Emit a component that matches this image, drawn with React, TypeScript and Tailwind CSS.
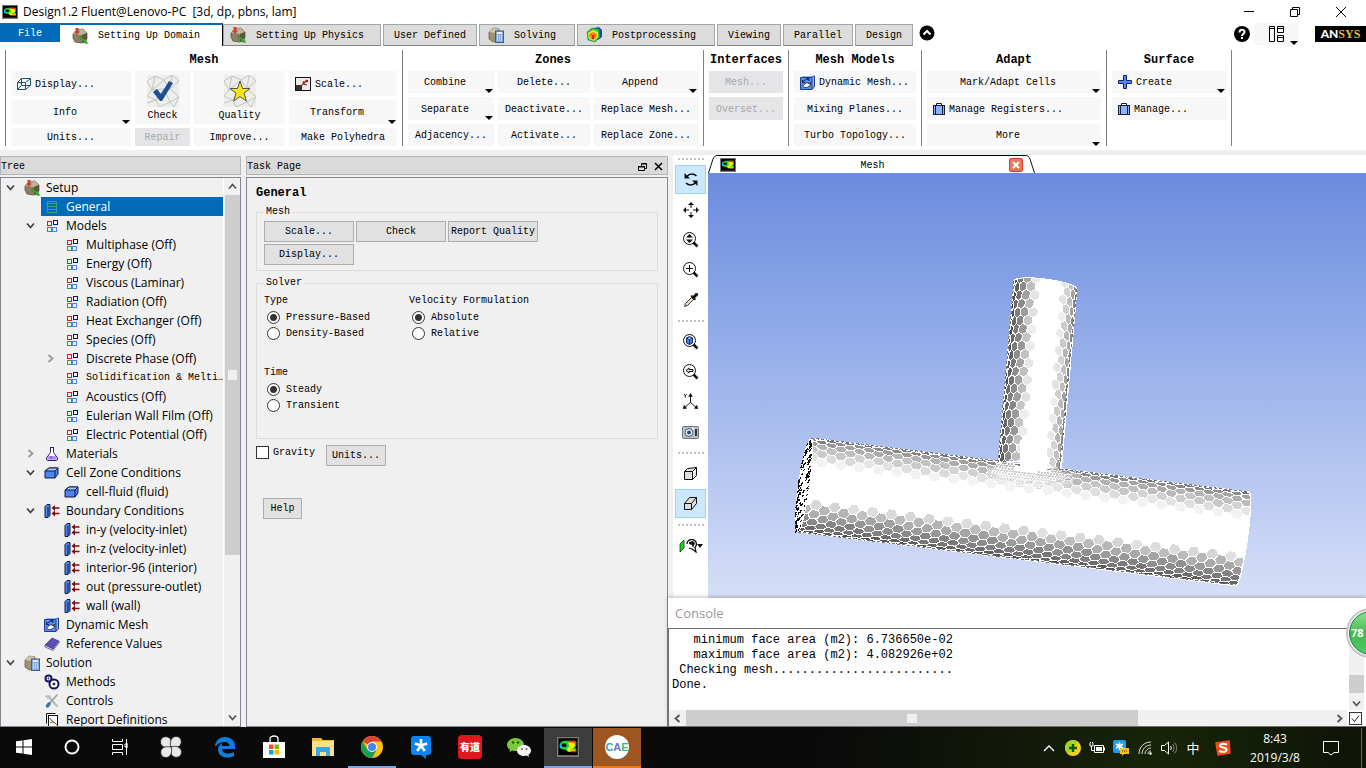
import type { ReactNode } from 'react';

const MONO = "font-['Liberation_Mono',monospace]";
const SANS = "font-['Open_Sans','Noto_Sans_CJK_SC',sans-serif]";

/* ---------- icons ---------- */

function FluentIcon({ className = 'w-4 h-4' }: { className?: string }) {
  return (
    <svg viewBox="0 0 16 16" preserveAspectRatio="none" className={className}>
      <rect width="16" height="16" fill="#7a7a7a" />
      <rect x="1" y="1" width="14" height="13.500" fill="#000" />
      <path d="M2 7c0-3 2-4 4-4h7c1.500 0 1.500 5-.5 6H14v3H8l-2-2C3 10 2 9 2 7z" fill="#19d63c" />
      <path d="M8 4h5c1 1 .5 3.500-1 4.500L9.500 10H13v1.500H8.500L7 9.500l2-2z" fill="#f7ef00" />
      <path d="M8.500 3H13c1.500 1 1.200 4 0 5.500V5c-1-.8-3-1-4.500-.5zM10 11h4v1.200h-4z" fill="#ff2a00" />
      <path d="M2 5.500h1v3.500H2z" fill="#00c8ff" />
      <ellipse cx="5.200" cy="6.500" rx="1.800" ry="1.500" fill="#000" />
    </svg>
  );
}

function SetupIcon() {
  return (
    <svg viewBox="0 0 16 16" className="w-4 h-4">
      <path d="M1 6l4-4 6-1 4 4v6l-5 4-7-1-2-4z" fill="#8c7f63" stroke="#4a4233" strokeWidth=".7" />
      <path d="M1 6l4-4 6-1 4 4-5 2z" fill="#bfb499" />
      <path d="M10 7l5-2v6l-5 4z" fill="#5f543e" />
      <path d="M3.500 0h3v3.500H8L5 7 2 3.500h1.500z" fill="#c8432a" />
      <path d="M8.500 8.500l4 3 1-1 2 5-5-1 1-1.200-4-3.300z" fill="#3fae2a" stroke="#1e6d13" strokeWidth=".5" />
    </svg>
  );
}

function SolveIcon() {
  return (
    <svg viewBox="0 0 16 16" className="w-4 h-4">
      <path d="M1 5l4-4 6 1v11l-6 2-4-3z" fill="#9c9272" stroke="#5c5540" strokeWidth=".7" />
      <path d="M1 5l4-4 6 1-4 4z" fill="#cfc8ac" />
      <rect x="7.500" y="4" width="8" height="11.500" fill="#86a8d8" stroke="#3d5d92" />
      <rect x="9" y="5" width="5" height="2" fill="#e8f0fb" />
      <path d="M9 9h5M9 11h5M9 13h5" stroke="#fff" strokeDasharray="1 1" />
    </svg>
  );
}

function PostIcon() {
  return (
    <svg viewBox="0 0 16 16" className="w-4 h-4">
      <path d="M8 1l5-1 3 3v7l-4 3-3-3z" fill="#1747d1" />
      <path d="M1 5l5-4 7 1 1 8-5 5-7-2z" fill="#28c840" stroke="#116b2a" strokeWidth=".5" />
      <path d="M2 6l5-3 5 2v5l-4 4-5-2z" fill="#f4e61c" />
      <path d="M3 7l4-2 4 2-1 4-3 2-3-2z" fill="#f58a12" />
      <path d="M4.500 7L7 8.500 9.500 7 8 9v3H6V9z" fill="#d9230f" />
    </svg>
  );
}

function DisplayIcon() {
  return (
    <svg viewBox="0 0 14 12" className="w-3.5 h-3" fill="none" stroke="#1f5468">
      <path d="M.5 4.500h8v7h-8zM4.500 .5h9v7h-9zM.5 4.500l4-4M8.500 4.500l5-4M8.500 11.500l5-4M.5 11.500l4-4" />
    </svg>
  );
}

function ScaleIcon() {
  return (
    <svg viewBox="0 0 16 14" className="w-4 h-3.5">
      <rect x=".5" y=".5" width="15" height="13" fill="#f5e9e9" stroke="#111" />
      <rect x="1" y="8" width="6" height="5" fill="#333" />
      <path d="M7 8l5-5" stroke="#8f1d1d" strokeWidth="1.500" />
      <path d="M8 4l1 3 3 1" fill="none" stroke="#8f1d1d" />
      <circle cx="12" cy="4" r="1.200" fill="#8f1d1d" />
    </svg>
  );
}

function MeshBackdrop({ children }: { children: ReactNode }) {
  return (
    <svg viewBox="0 0 32 32" className="w-8 h-8">
      <rect width="32" height="32" fill="#ededeb" />
      <path
        d="M0 6l8-5 9 4 8-5 7 6M0 6l5 9 12-10 6 9 9-8M5 15l-5 6 9 4 8-11M23 14l9 8-9 5-6-13-8 11 3 7 11-5 4 5M0 28l9-3M5 15l12-1 6 0M8 1l-3 14M25 0l-2 14M32 22l-5 10"
        fill="none"
        stroke="#c4c4c0"
      />
      {children}
    </svg>
  );
}

function DynamicIcon() {
  return (
    <svg viewBox="0 0 15 15" className="w-[15px] h-[15px]">
      <path d="M1 3l1.500-2H14v11l-1.500 2H1z" fill="#8db3ff" />
      <path d="M1 3h11v11H1z" fill="#5b8def" />
      <path d="M.5 14.500V2.500H12v12zM12 2.500l2-2M12 14l2.500-2V1" fill="none" stroke="#1b3c8c" />
      <path d="M3 11.500c0-2 2-2.500 4-4l2.500 1.500 1-2c1 3-1.500 5.500-5 5.500-1.500 0-2.500-.2-2.500-1z" fill="#fff" stroke="#111" strokeWidth=".8" />
      <path d="M2.500 7c1.500-1.500 3-2.500 6-3M6.500 3.500H9v2.500M2.500 5v2.500H5" fill="none" stroke="#0c1f55" />
    </svg>
  );
}

function CaseIcon() {
  return (
    <svg viewBox="0 0 12 12" className="w-3 h-3">
      <path d="M3.500 2.500v-2h5v2" fill="none" stroke="#14213d" />
      <rect x=".5" y="2.500" width="11" height="9" fill="#8fb0ff" stroke="#14213d" />
      <path d="M2.500 2.500v9M9.500 2.500v9" stroke="#14213d" />
    </svg>
  );
}

function PlusIcon() {
  return (
    <svg viewBox="0 0 14 14" className="w-3.5 h-3.5">
      <path d="M5.500 .5h3v5h5v3h-5v5h-3v-5h-5v-3h5z" fill="#4f86ff" stroke="#12245a" />
    </svg>
  );
}

function GeneralIcon() {
  return (
    <svg viewBox="0 0 10 12" className="w-2.5 h-3" fill="none" stroke="#3fa37d">
      <path d="M.5 .5h9v11h-9zM.5 2.500h9M.5 5.500h9M.5 8.500h9" />
    </svg>
  );
}

function ModelsIcon() {
  return (
    <svg viewBox="0 0 12 12" className="w-3 h-3" fill="none" shapeRendering="crispEdges">
      <rect x="1" y="1.500" width="4" height="4" stroke="#e8141c" />
      <rect x="7" y=".5" width="4" height="4" stroke="#12126e" />
      <rect x="1" y="7" width="4" height="4" stroke="#3f9a4a" />
      <rect x="6.500" y="7" width="4" height="4" stroke="#4d84f0" />
    </svg>
  );
}

function FlaskIcon() {
  return (
    <svg viewBox="0 0 14 16" className="w-3.5 h-4">
      <path d="M5 1.500h4M5.500 1.500v5L1.500 12c-.5 1.500.5 2.500 1.500 2.500h8c1 0 2-1 1.500-2.500L8.500 6.500v-5" fill="#fff" stroke="#2a2360" />
      <path d="M3.500 10h7l1.500 2.500c0 .8-.5 1.200-1 1.200H3c-.6 0-1-.6-1-1.200z" fill="#b58cf2" />
      <circle cx="6" cy="11.500" r="1" fill="#6b3fd0" />
    </svg>
  );
}

function CellIcon() {
  return (
    <svg viewBox="0 0 15 12" className="w-[15px] h-3">
      <path d="M1 4l4-3h9v6l-3 4H1z" fill="#4d84f0" stroke="#101c44" />
      <path d="M1 4l4-3h9l-3 3z" fill="#a9c5ff" stroke="#101c44" />
      <path d="M11 4v7" stroke="#101c44" />
    </svg>
  );
}

function BoundaryIcon() {
  return (
    <svg viewBox="0 0 16 14" className="w-4 h-3.5">
      <path d="M1 2.500L3 .5h3v11l-2 2H1z" fill="#4d84f0" stroke="#101c44" />
      <path d="M4 3v10" stroke="#101c44" />
      <path d="M9 4h6.500M9 9.500h6.500" stroke="#7a0f12" strokeWidth="1.400" />
      <path d="M7.500 4L11 1v6zM7.500 9.500l3.500-3v6z" fill="#7a0f12" />
    </svg>
  );
}

function BookIcon() {
  return (
    <svg viewBox="0 0 16 14" className="w-4 h-3.5">
      <path d="M1 8l7-7 7 3-6 8z" fill="#5a4fb0" stroke="#322a70" strokeWidth=".6" />
      <path d="M1 8l8 4 6-8v2l-6 7.500L1 10z" fill="#d8d6ee" stroke="#322a70" strokeWidth=".6" />
    </svg>
  );
}

function GearsIcon() {
  return (
    <svg viewBox="0 0 16 16" className="w-4 h-4" fill="#fff" stroke="#15155e">
      <circle cx="4.500" cy="4.500" r="3" strokeWidth="2" />
      <circle cx="4.500" cy="4.500" r=".6" />
      <circle cx="10" cy="10" r="4.500" strokeWidth="2" />
      <circle cx="10" cy="10" r="1" fill="#15155e" />
    </svg>
  );
}

function ToolsIcon() {
  return (
    <svg viewBox="0 0 16 16" className="w-4 h-4" strokeLinecap="round">
      <path d="M4 3l9 10" stroke="#b5b5b5" strokeWidth="2" />
      <path d="M13 2L5 11" stroke="#9a9a9a" strokeWidth="1.500" />
      <path d="M2 3l2 2 2-2" stroke="#bdbdbd" fill="none" strokeWidth="1.500" />
      <path d="M3.500 13l1.500-2" stroke="#3f6fa8" strokeWidth="3.500" />
    </svg>
  );
}

function ReportIcon() {
  return (
    <svg viewBox="0 0 14 15" className="w-3.5 h-[15px]" fill="#fff" stroke="#111">
      <path d="M1.500 11.500v-10h9" />
      <rect x="3.500" y="3.500" width="9" height="11" />
      <path d="M5 6l2 3 3 2 2 2" stroke="#e02020" fill="none" />
      <path d="M5 11l2-1 2 1" stroke="#1d9e36" fill="none" />
    </svg>
  );
}

function Chevron({ dir, color = '#555' }: { dir: 'up' | 'down' | 'left' | 'right'; color?: string }) {
  const d = {
    up: 'M1 6.500l3.500-4 3.500 4',
    down: 'M1 2.500l3.500 4 3.500-4',
    left: 'M6.500 1l-4 3.500 4 3.500',
    right: 'M2.500 1l4 3.500-4 3.500',
  }[dir];
  return (
    <svg viewBox="0 0 9 9" className="w-[9px] h-[9px]" fill="none" stroke={color} strokeWidth="1.800">
      <path d={d} />
    </svg>
  );
}

/* ---------- title bar and ribbon ---------- */

function TitleBar() {
  return (
    <header className={`flex items-center h-[23px] bg-white ${SANS}`}>
      <FluentIcon className="w-4 h-3.5 ml-0.5" />
      <h1 className="ml-[5px] text-[12px] leading-5 whitespace-pre text-black">Design1.2 Fluent@Lenovo-PC  [3d, dp, pbns, lam]</h1>
      <div className="ml-auto mr-0.5 flex">
        <button aria-label="Minimize" className="w-[46px] h-5 grid place-items-center">
          <svg viewBox="0 0 10 10" className="w-2.5 h-2.5" stroke="#000"><path d="M0 4.500h10" /></svg>
        </button>
        <button aria-label="Restore" className="w-[46px] h-5 grid place-items-center">
          <svg viewBox="0 0 10 10" className="w-2.5 h-2.5" fill="none" stroke="#000">
            <path d="M.5 2.500h7v7h-7zM2.500 2.500v-2h7v7h-2" />
          </svg>
        </button>
        <button aria-label="Close" className="w-[46px] h-5 grid place-items-center">
          <svg viewBox="0 0 10 10" className="w-2.5 h-2.5" stroke="#000"><path d="M0 0l10 10M10 0L0 10" /></svg>
        </button>
      </div>
    </header>
  );
}

function Tab({ width, icon, children }: { width: string; icon?: ReactNode; children: ReactNode }) {
  return (
    <button
      className={`${width} h-[22px] shrink-0 flex items-center justify-center border border-[#a5a5a5] border-b-[#808080] bg-[#dcdcdc] ${
        icon ? 'pr-2.5' : ''
      }`}
    >
      {icon && <span className="mr-2.5">{icon}</span>}
      <span className="pt-0.5">{children}</span>
    </button>
  );
}

function TabBar() {
  return (
    <nav className="flex h-[23px] bg-white">
      <button className="w-[60px] h-[19px] bg-[#026bb9] pt-0.5 text-white">File</button>
      <button className="w-[163px] h-[23px] shrink-0 flex items-center justify-center border-t-2 border-t-[#026bb9] border-r border-r-black pr-2.5">
        <SetupIcon />
        <span className="ml-2.5">Setting Up Domain</span>
      </button>
      <div className="flex gap-0.5 pt-px">
        <Tab width="w-[158px]" icon={<SetupIcon />}>Setting Up Physics</Tab>
        <Tab width="w-[94px]">User Defined</Tab>
        <Tab width="w-[96px]" icon={<SolveIcon />}>Solving</Tab>
        <Tab width="w-[138px]" icon={<PostIcon />}>Postprocessing</Tab>
        <Tab width="w-[64px]">Viewing</Tab>
        <Tab width="w-[70px]">Parallel</Tab>
        <Tab width="w-[58px]">Design</Tab>
      </div>
      <button aria-label="Collapse ribbon" className="ml-1.5 w-4 h-[19px] grid place-items-center">
        <svg viewBox="0 0 16 16" className="w-4 h-4">
          <circle cx="8" cy="8" r="7.500" />
          <path d="M4.500 9.500L8 6l3.500 3.500" fill="none" stroke="#fff" strokeWidth="2" />
        </svg>
      </button>
      <div className="ml-auto flex">
        <button aria-label="Help" className="w-5 h-[22px] grid place-items-center">
          <svg viewBox="0 0 16 16" className="w-4 h-4">
            <circle cx="8" cy="8" r="8" />
            <path d="M5.500 6.500c0-3.500 5-3.500 5-.5 0 2-2.500 2-2.500 4" fill="none" stroke="#fff" strokeWidth="2" />
            <rect x="7" y="11" width="2" height="2" fill="#fff" />
          </svg>
        </button>
        <button aria-label="Arrange the workspace" className="relative ml-0.5 w-[45px] h-[22px] grid place-items-center bg-[#f7f7f7]">
          <svg viewBox="0 0 16 16" className="w-4 h-4" fill="none" stroke="#000">
            <path d="M.5 .5h5v15h-5zM.5 2.500h5M8.500 .5h6v6h-6zM8.500 2.500h6M8.500 9.500h6v6h-6zM8.500 11.500h6" />
          </svg>
          <DropArrow />
        </button>
        <div className="ml-4 mt-[3px] w-[51px] h-4 flex items-center justify-center bg-black text-[12px] leading-4 text-white">
          <span className="font-['Lato',sans-serif] font-black">AN</span>
          <span className="font-['Liberation_Serif',serif] font-bold text-[#e8bb3c]">SYS</span>
        </div>
      </div>
    </nav>
  );
}

function DropArrow() {
  return <span className="absolute right-px bottom-0 border-x-4 border-x-transparent border-t-4 border-t-black" />;
}

interface CmdProps {
  children: ReactNode;
  icon?: ReactNode;
  drop?: boolean;
  left?: boolean;
  disabled?: boolean;
}

function Cmd({ children, icon, drop, left, disabled }: CmdProps) {
  return (
    <button
      disabled={disabled}
      className={`relative flex items-center gap-1 whitespace-nowrap ${left ? 'justify-start pl-1.5' : 'justify-center'} ${
        drop && !left ? 'pr-3' : ''
      } ${disabled ? 'bg-[#e5e5e7] text-[#a8a8a8]' : 'bg-[#f7f7f7]'}`}
    >
      {icon}
      <span className="pt-0.5">{children}</span>
      {drop && <DropArrow />}
    </button>
  );
}

function BigCmd({ children, icon }: { children: ReactNode; icon: ReactNode }) {
  return (
    <button className="row-span-2 flex flex-col items-center pt-1 bg-[#f7f7f7]">
      {icon}
      <span className="pt-px leading-4">{children}</span>
    </button>
  );
}

function Group({ title, grid, children }: { title: string; grid: string; children: ReactNode }) {
  return (
    <section className="border-l border-[#808080] px-[5px]">
      <h2 className="h-[21px] pt-0.5 text-center text-[12px] leading-4 font-bold whitespace-nowrap">{title}</h2>
      <div className={`grid grid-flow-col gap-1 ${grid}`}>{children}</div>
    </section>
  );
}

function Ribbon() {
  return (
    <div className="flex pl-[5px] pt-1 pb-1 bg-white">
      <Group title="Mesh" grid="grid-rows-[25px_24px_18px] grid-cols-[120px_55px_91px_108px]">
        <Cmd left icon={<DisplayIcon />}>Display...</Cmd>
        <Cmd drop>Info</Cmd>
        <Cmd>Units...</Cmd>
        <BigCmd
          icon={
            <MeshBackdrop>
              <path d="M6 17l4-3 4 5 8-13 4 2-11 18h-2z" fill="#1e4f93" />
            </MeshBackdrop>
          }
        >
          Check
        </BigCmd>
        <Cmd disabled>Repair</Cmd>
        <BigCmd
          icon={
            <MeshBackdrop>
              <path d="M16 6l2.500 7.500H26l-6 4.500 2.300 8L16 21.500 9.700 26l2.300-8-6-4.500h7.500z" fill="#ffe60a" stroke="#555" />
            </MeshBackdrop>
          }
        >
          Quality
        </BigCmd>
        <Cmd>Improve...</Cmd>
        <Cmd left icon={<ScaleIcon />}>Scale...</Cmd>
        <Cmd drop>Transform</Cmd>
        <Cmd>Make Polyhedra</Cmd>
      </Group>
      <Group title="Zones" grid="grid-rows-[22px_23px_22px] grid-cols-[86px_92px_104px]">
        <Cmd drop>Combine</Cmd>
        <Cmd drop>Separate</Cmd>
        <Cmd>Adjacency...</Cmd>
        <Cmd>Delete...</Cmd>
        <Cmd>Deactivate...</Cmd>
        <Cmd>Activate...</Cmd>
        <Cmd drop>Append</Cmd>
        <Cmd>Replace Mesh...</Cmd>
        <Cmd>Replace Zone...</Cmd>
      </Group>
      <Group title="Interfaces" grid="grid-rows-[22px_23px_22px] grid-cols-[74px]">
        <Cmd disabled>Mesh...</Cmd>
        <Cmd disabled>Overset...</Cmd>
      </Group>
      <Group title="Mesh Models" grid="grid-rows-[22px_23px_22px] grid-cols-[122px]">
        <Cmd left icon={<DynamicIcon />}>Dynamic Mesh...</Cmd>
        <Cmd>Mixing Planes...</Cmd>
        <Cmd>Turbo Topology...</Cmd>
      </Group>
      <Group title="Adapt" grid="grid-rows-[22px_23px_22px] grid-cols-[174px]">
        <Cmd drop>Mark/Adapt Cells</Cmd>
        <Cmd left icon={<CaseIcon />}>Manage Registers...</Cmd>
        <Cmd drop>More</Cmd>
      </Group>
      <Group title="Surface" grid="grid-rows-[22px_23px_22px] grid-cols-[114px]">
        <Cmd left drop icon={<PlusIcon />}>Create</Cmd>
        <Cmd left icon={<CaseIcon />}>Manage...</Cmd>
      </Group>
      <div className="border-l border-[#808080]" />
    </div>
  );
}

/* ---------- outline tree ---------- */

interface Node {
  label: string;
  level: number;
  icon: ReactNode;
  open?: boolean;
  selected?: boolean;
  mono?: boolean;
}

const nodes: Node[] = [
  { label: 'Setup', level: 0, icon: <SetupIcon />, open: true },
  { label: 'General', level: 1, icon: <GeneralIcon />, selected: true },
  { label: 'Models', level: 1, icon: <ModelsIcon />, open: true },
  { label: 'Multiphase (Off)', level: 2, icon: <ModelsIcon /> },
  { label: 'Energy (Off)', level: 2, icon: <ModelsIcon /> },
  { label: 'Viscous (Laminar)', level: 2, icon: <ModelsIcon /> },
  { label: 'Radiation (Off)', level: 2, icon: <ModelsIcon /> },
  { label: 'Heat Exchanger (Off)', level: 2, icon: <ModelsIcon /> },
  { label: 'Species (Off)', level: 2, icon: <ModelsIcon /> },
  { label: 'Discrete Phase (Off)', level: 2, icon: <ModelsIcon />, open: false },
  { label: 'Solidification & Melti…', level: 2, icon: <ModelsIcon />, mono: true },
  { label: 'Acoustics (Off)', level: 2, icon: <ModelsIcon /> },
  { label: 'Eulerian Wall Film (Off)', level: 2, icon: <ModelsIcon /> },
  { label: 'Electric Potential (Off)', level: 2, icon: <ModelsIcon /> },
  { label: 'Materials', level: 1, icon: <FlaskIcon />, open: false },
  { label: 'Cell Zone Conditions', level: 1, icon: <CellIcon />, open: true },
  { label: 'cell-fluid (fluid)', level: 2, icon: <CellIcon /> },
  { label: 'Boundary Conditions', level: 1, icon: <BoundaryIcon />, open: true },
  { label: 'in-y (velocity-inlet)', level: 2, icon: <BoundaryIcon /> },
  { label: 'in-z (velocity-inlet)', level: 2, icon: <BoundaryIcon /> },
  { label: 'interior-96 (interior)', level: 2, icon: <BoundaryIcon /> },
  { label: 'out (pressure-outlet)', level: 2, icon: <BoundaryIcon /> },
  { label: 'wall (wall)', level: 2, icon: <BoundaryIcon /> },
  { label: 'Dynamic Mesh', level: 1, icon: <DynamicIcon /> },
  { label: 'Reference Values', level: 1, icon: <BookIcon /> },
  { label: 'Solution', level: 0, icon: <SolveIcon />, open: true },
  { label: 'Methods', level: 1, icon: <GearsIcon /> },
  { label: 'Controls', level: 1, icon: <ToolsIcon /> },
  { label: 'Report Definitions', level: 1, icon: <ReportIcon /> },
];

const indent = ['pl-0', 'pl-5', 'pl-10'];

function TreeRow({ node }: { node: Node }) {
  return (
    <li className={`flex h-[19px] ${indent[node.level]}`}>
      <span className="w-[19px] mr-px shrink-0 grid place-items-center">
        {node.open !== undefined && <Chevron dir={node.open ? 'down' : 'right'} color={node.open ? '#444' : '#999'} />}
      </span>
      <span className={`flex flex-1 min-w-0 items-center ${node.selected ? 'bg-[#026bb9] text-white' : ''}`}>
        <span className="w-[21px] mr-px shrink-0 grid place-items-center">{node.icon}</span>
        <span className={`pl-[3px] whitespace-nowrap leading-4 ${node.mono ? `${MONO} text-[10px]` : 'text-[12px]'}`}>{node.label}</span>
      </span>
    </li>
  );
}

function PanelHeader({ title, children }: { title: string; children?: ReactNode }) {
  return (
    <div className="flex items-center h-[19px] mb-0.5 shrink-0 border border-[#b4b4b4] bg-[#dadada] pt-0.5">
      <h2>{title}</h2>
      {children}
    </div>
  );
}

function TreePanel() {
  return (
    <aside className="w-[241px] shrink-0 flex flex-col pt-px">
      <PanelHeader title="Tree" />
      <div className="flex flex-1 min-h-0 border border-[#828790]">
        <ul className={`flex-1 min-w-0 overflow-hidden ${SANS}`}>
          {nodes.map((n) => (
            <TreeRow key={n.label} node={n} />
          ))}
        </ul>
        <div className="w-[17px] flex flex-col items-center border-l border-white">
          <span className="h-[17px] grid place-items-center"><Chevron dir="up" /></span>
          <div className="w-[15px] h-[360px] grid place-items-center bg-[#cdcdcd]">
            <span className="w-[9px] h-[10px] bg-[#f0f0f0]" />
          </div>
          <span className="mt-auto h-[17px] grid place-items-center"><Chevron dir="down" /></span>
        </div>
      </div>
    </aside>
  );
}

/* ---------- task page ---------- */

function PushButton({ className = '', children }: { className?: string; children: ReactNode }) {
  return <button className={`h-[21px] border border-[#adadad] bg-[#e1e1e1] whitespace-nowrap ${className}`}>{children}</button>;
}

function Radio({ name, label, checked }: { name: string; label: string; checked?: boolean }) {
  return (
    <label className="flex items-center h-4 pl-[3px]">
      <input
        type="radio"
        name={name}
        defaultChecked={checked}
        className="appearance-none w-[13px] h-[13px] rounded-full border border-[#333] bg-white checked:bg-[radial-gradient(circle,#333_0,#333_3px,#fff_4px)]"
      />
      <span className="ml-[6px] pt-px">{label}</span>
    </label>
  );
}

function TaskPage() {
  return (
    <section className="w-[422px] shrink-0 ml-[5px] flex flex-col pt-px">
      <PanelHeader title="Task Page">
        <button aria-label="Float" className="ml-auto mr-1.5">
          <svg viewBox="0 0 10 10" className="w-2.5 h-2.5" fill="none" stroke="#000">
            <path d="M.5 4.500h6v4h-6zM.5 5h6M3.500 4V1.500h5v5h-2M3.500 2h5" />
          </svg>
        </button>
        <button aria-label="Close" className="mr-1">
          <svg viewBox="0 0 9 9" className="w-[9px] h-[9px]" stroke="#000" strokeWidth="1.500"><path d="M1 1l7 7M8 1L1 8" /></svg>
        </button>
      </PanelHeader>
      <div className="flex-1 min-h-0 border border-[#828790] pl-[9px] pr-[9px] pt-[7px]">
        <h3 className="text-[12px] leading-4 font-bold">General</h3>
        <fieldset className="mt-[3px] border border-[#dcdcdc] px-[7px] pb-[5px]">
          <legend className="px-0.5 leading-4">Mesh</legend>
          <div className="grid grid-cols-[90px_90px_90px] gap-0.5 pt-px">
            <PushButton>Scale...</PushButton>
            <PushButton>Check</PushButton>
            <PushButton>Report Quality</PushButton>
            <PushButton>Display...</PushButton>
          </div>
        </fieldset>
        <fieldset className="mt-1 border border-[#dcdcdc] px-[7px] pb-[25px]">
          <legend className="px-0.5 leading-4">Solver</legend>
          <div className="flex pt-0.5 leading-4">
            <div className="w-[145px]" role="radiogroup" aria-label="Type">
              <div>Type</div>
              <Radio name="type" label="Pressure-Based" checked />
              <Radio name="type" label="Density-Based" />
            </div>
            <div role="radiogroup" aria-label="Velocity Formulation">
              <div>Velocity Formulation</div>
              <Radio name="velocity" label="Absolute" checked />
              <Radio name="velocity" label="Relative" />
            </div>
          </div>
          <div className="mt-6 leading-4" role="radiogroup" aria-label="Time">
            <div>Time</div>
            <Radio name="time" label="Steady" checked />
            <Radio name="time" label="Transient" />
          </div>
        </fieldset>
        <div className="mt-1.5 flex items-start">
          <label className="flex items-center h-[15px] w-[70px]">
            <input type="checkbox" className="appearance-none w-[13px] h-[13px] border border-[#333] bg-white" />
            <span className="ml-1">Gravity</span>
          </label>
          <PushButton className="w-[60px]">Units...</PushButton>
        </div>
        <PushButton className="mt-8 ml-[7px] w-[39px]">Help</PushButton>
      </div>
    </section>
  );
}

/* ---------- graphics toolbar ---------- */

function Lens({ children }: { children: ReactNode }) {
  return (
    <svg viewBox="0 0 17 17" className="w-[17px] h-[17px]" fill="none" stroke="#111">
      <circle cx="7.500" cy="7.500" r="6" />
      <path d="M11.500 11.500l4 4" strokeWidth="2.500" />
      {children}
    </svg>
  );
}

function Tool({ label, active, children }: { label: string; active?: boolean; children: ReactNode }) {
  return (
    <button
      aria-label={label}
      className={`w-[31px] h-[29px] mb-px shrink-0 grid place-items-center border ${
        active ? 'border-[#99d1ff] bg-[#cce8ff]' : 'border-transparent'
      }`}
    >
      {children}
    </button>
  );
}

function Grip() {
  return <div className="w-[26px] h-3 shrink-0 flex items-center"><span className="w-full border-t-2 border-dotted border-[#c4c4c4]" /></div>;
}

function Toolbar() {
  return (
    <div className="w-[35px] shrink-0 flex flex-col items-center overflow-hidden bg-white">
      <div className="-mt-1.5 h-4 flex items-end"><Grip /></div>
      <Tool label="Rotate" active>
        <svg viewBox="0 0 14 15" className="w-3.5 h-[15px]" fill="none" stroke="#111" strokeWidth="1.600">
          <path d="M3 4.500c2.500-3.500 7-3 9.500-.5M11.500 10.500c-2.500 3.500-7 3-9.500.5" />
          <path d="M.5 1v5.500H6zM13.500 14V8.500H8z" fill="#111" stroke="none" />
        </svg>
      </Tool>
      <Tool label="Pan">
        <svg viewBox="0 0 16 16" className="w-4 h-4" fill="#111" stroke="#111">
          <path d="M8 2v4M8 10v4M2 8h4M10 8h4" />
          <path d="M8 0l3 3H5zM8 16l3-3H5zM0 8l3-3v6zM16 8l-3-3v6z" stroke="none" />
        </svg>
      </Tool>
      <Tool label="Zoom in/out">
        <Lens><path d="M7.500 3l3.500 3.500H4zM7.500 12L11 8.500H4z" fill="#111" stroke="none" /></Lens>
      </Tool>
      <Tool label="Zoom to area"><Lens><path d="M7.500 4v7M4 7.500h7" /></Lens></Tool>
      <Tool label="Probe">
        <svg viewBox="0 0 16 16" className="w-4 h-4">
          <path d="M1.500 14.500l1-3 6-6 2 2-6 6z" fill="#e8dcc8" stroke="#333" />
          <path d="M7.500 4L9 3l1 1 2.500-2.800c1.500-1 3.300.5 2.500 2L12 6l1 1-1.500 1.500z" fill="#111" />
        </svg>
      </Tool>
      <Grip />
      <Tool label="Fit to window">
        <Lens><path d="M4.500 5l3-1.500 3 1.500v5l-3 1.500-3-1.500zM4.500 5l3 1.500 3-1.500M7.500 6.500v5" fill="#4d84f0" stroke="#142a6b" /></Lens>
      </Tool>
      <Tool label="Previous view"><Lens><path d="M4 7.500l3-2.500v1.500h4v2H7V10z" fill="#ddd" /></Lens></Tool>
      <Tool label="Axes">
        <svg viewBox="0 0 18 18" className="w-[17px] h-[17px]" fill="none" stroke="#111">
          <path d="M9 10V2M9 10l-7 6M9 10l7 6M2 1l1.500 2L5 1M3.500 3v2" />
          <path d="M9 0l2.500 4h-5zM1 17l1-4.500 3.500 4zM17 17l-1-4.500-3.500 4z" fill="#111" stroke="none" />
        </svg>
      </Tool>
      <Tool label="Save picture">
        <svg viewBox="0 0 17 14" className="w-[17px] h-3.5">
          <rect x=".5" y="1.500" width="16" height="12" rx="1" fill="#b8c0c8" stroke="#6a747e" />
          <circle cx="7" cy="7.500" r="4" fill="#e8eef4" stroke="#555" />
          <circle cx="7" cy="7.500" r="2" fill="#234a78" />
          <rect x="13" y="4" width="2" height="7" fill="#333" />
          <rect x="10" y="2.500" width="2" height="2" fill="#fff" />
        </svg>
      </Tool>
      <Grip />
      <Tool label="Perspective">
        <svg viewBox="0 0 13 13" className="w-[13px] h-[13px]" fill="#ddd" stroke="#111">
          <path d="M.5 4.500h8v8h-8zM.5 4.500l3-3 9-1-4 4M12.500 .5v8l-4 4" />
        </svg>
      </Tool>
      <Tool label="Orthographic" active>
        <svg viewBox="0 0 13 13" className="w-[13px] h-[13px]" fill="#ddd" stroke="#111">
          <path d="M.5 6.500h7v6h-7zM.5 6.500l5-6h7l-5 6M12.500 .5v6l-5 6" />
        </svg>
      </Tool>
      <Grip />
      <Tool label="Visibility">
        <svg viewBox="0 0 24 14" className="w-6 h-3.5">
          <path d="M1 5l4-4v8l-4 4z" fill="#18d818" stroke="#111" strokeWidth=".7" />
          <path d="M8 5c0-5 7-6 9-2 1 3 0 4.500-1 5.500l1 4.500-4-3-3-1" fill="#fff" stroke="#111" strokeWidth="1.300" />
          <path d="M10 3l4-1 2 2-2 5-1-3-3-1z" fill="#111" />
          <path d="M18 5h6l-3 4z" fill="#111" />
        </svg>
      </Tool>
    </div>
  );
}

/* ---------- mesh viewport ---------- */

type Pt = [number, number];
type Stops = [number, number][];

interface Pipe {
  origin: Pt;
  along: Pt;
  across: Pt;
  bulge: Pt;
  length: number;
  arc: number;
  pitch: number;
  row: number;
  tones: Stops;
}

function tone(stops: Stops, f: number) {
  for (let i = 1; i < stops.length; i++) {
    const [f0, g0] = stops[i - 1];
    const [f1, g1] = stops[i];
    if (f <= f1) return Math.round(g0 + ((g1 - g0) * (f - f0)) / (f1 - f0));
  }
  return stops[stops.length - 1][1];
}

// Unrolls the visible half of a pipe into hexagons and wraps them back on it.
function hexCells(p: Pipe) {
  const cells: { d: string; fill: string }[] = [];
  const s = p.pitch / 1.5;
  const clamp = (v: number, max: number) => Math.min(Math.max(v, 0), max);
  const project = (t: number, a: number) => {
    const u = clamp(t, p.length) / p.length;
    const th = (clamp(a, p.arc) / p.arc) * Math.PI;
    const v = (1 - Math.cos(th)) / 2;
    const x = p.origin[0] + p.along[0] * u + p.across[0] * v + p.bulge[0] * Math.sin(th);
    const y = p.origin[1] + p.along[1] * u + p.across[1] * v + p.bulge[1] * Math.sin(th);
    return `${x.toFixed(1)} ${y.toFixed(1)}`;
  };
  for (let i = 0; i * p.pitch <= p.length + s; i++) {
    for (let j = 0; j * p.row <= p.arc + p.row; j++) {
      const t = i * p.pitch;
      const a = (j + (i % 2) / 2) * p.row;
      const h = p.row / 2;
      const g = tone(p.tones, clamp(a, p.arc) / p.arc);
      const jitter = g > 240 ? 0 : ((i * 7 + j * 13) % 5) * 3 - 6;
      const c = Math.min(255, g + jitter);
      const pts = [
        project(t - s, a),
        project(t - s / 2, a - h),
        project(t + s / 2, a - h),
        project(t + s, a),
        project(t + s / 2, a + h),
        project(t - s / 2, a + h),
      ];
      cells.push({ d: `M${pts.join('L')}Z`, fill: `rgb(${c},${c},${c})` });
    }
  }
  return cells;
}

const mainPipe = hexCells({
  origin: [811, 438],
  along: [438, 54],
  across: [-13, 94],
  bulge: [5, 0],
  length: 441,
  arc: 148,
  pitch: 9.5,
  row: 11,
  tones: [[0, 80], [0.08, 120], [0.17, 170], [0.26, 205], [0.33, 238], [0.35, 255], [0.6, 255], [0.62, 228], [0.67, 185], [0.74, 150], [0.85, 115], [1, 50]],
});

const branchPipe = hexCells({
  origin: [1014, 281],
  along: [-16, 184],
  across: [63, 8],
  bulge: [0, -6],
  length: 184,
  arc: 99,
  pitch: 8.5,
  row: 10,
  tones: [[0, 40], [0.1, 80], [0.2, 120], [0.3, 155], [0.37, 205], [0.41, 235], [0.43, 255], [0.66, 255], [0.7, 235], [0.77, 200], [0.86, 165], [1, 80]],
});

// Refined cells where the two pipes meet.
const joint: { x: number; y: number; c: number }[] = [];
for (let j = 0; j < 9; j++) {
  for (let i = 0; i < 32; i++) {
    const x = 988 + i * 3 + (j % 2) * 1.5;
    const y = 461 + j * 2.5 + (x - 988) * 0.123;
    const dx = (x - 1032) / 48;
    const dy = (y - 474) / 14;
    if (dx * dx + dy * dy < 1 && !(x > 1014 && x < 1050 && y < 472)) joint.push({ x, y, c: 185 + j * 8 });
  }
}

const dashes = Array.from({ length: 120 }, (_, i) => {
  const k = ((i * 37) % 91) - 45;
  const w = 5.5 * Math.sqrt(1 - (k / 47) * (k / 47));
  return { x: Math.sin(i * i * 1.7) * w, y: k, h: 1.5 + (i % 3) };
});

function Viewport() {
  return (
    <div className="flex-1 min-w-0 flex flex-col bg-white">
      <div className="flex h-[18px] shrink-0">
        <svg viewBox="0 0 10 18" className="w-2.5 h-[18px]" fill="none" stroke="#111"><path d="M.5 18L5 4C6 1.500 7 .5 10 .5" /></svg>
        <div className="w-[307px] flex items-center border-t border-black">
          <FluentIcon className="w-4 h-3.5 ml-0.5" />
          <span className="flex-1 text-center pt-0.5">Mesh</span>
          <button aria-label="Close tab" className="mr-0.5 w-3.5 h-3.5 grid place-items-center rounded-xs border border-[#d8402a] bg-[#e07a5c]">
            <svg viewBox="0 0 8 8" className="w-2 h-2" stroke="#fff" strokeWidth="2"><path d="M1 1l6 6M7 1L1 7" /></svg>
          </button>
        </div>
        <svg viewBox="0 0 10 18" className="w-2.5 h-[18px]" fill="none" stroke="#111"><path d="M9.500 18L5 4C4 1.500 3 .5 0 .5" /></svg>
      </div>
      <div className="flex-1 min-h-0 bg-linear-to-b from-[#6b8bde] to-[#d6dff7]">
        <svg viewBox="708 173 658 425" preserveAspectRatio="xMidYMid meet" className="w-full h-full" role="img" aria-label="Polyhedral mesh of a pipe tee" shapeRendering="crispEdges">
          <g transform="translate(804.500 485) rotate(7.900)">
            <ellipse rx="6.500" ry="47" fill="#fff" />
            {dashes.map((d, i) => (
              <path key={i} d={`M${d.x} ${d.y}l-1 ${d.h}`} stroke="#111" strokeWidth="1.200" />
            ))}
          </g>
          <g stroke="#fff" strokeWidth="1">
            {mainPipe.map((c, i) => (
              <path key={i} d={c.d} fill={c.fill} />
            ))}
          </g>
          <g stroke="#fff" strokeWidth="1">
            {branchPipe.map((c, i) => (
              <path key={i} d={c.d} fill={c.fill} />
            ))}
          </g>
          <path d="M1000 463L1058 471L1072 478Q1030 488 990 472z" fill="#fff" />
          <path d="M1020 440h27v36h-27z" fill="#fff" />
          {joint.map((h, i) => (
            <circle key={i} cx={h.x} cy={h.y} r="1.200" fill={`rgb(${h.c},${h.c},${h.c})`} />
          ))}
          <g fill="none" strokeDasharray="3 2" stroke="#777">
            <path d="M811 438l187 23M1060 469l189 23M798 532l438 53M1014 281l-16 181M1077 289l-18 181" />
          </g>
        </svg>
      </div>
    </div>
  );
}

/* ---------- console ---------- */

const log = `   minimum face area (m2): 6.736650e-02
   maximum face area (m2): 4.082926e+02
 Checking mesh.........................
Done.`;

function Console() {
  return (
    <section className="relative shrink-0 bg-white shadow-[0_-1px_4px_rgba(0,0,0,0.25)]">
      <h2 className={`h-[30px] pl-[7px] text-[13px] leading-[30px] text-[#999] ${SANS}`}>Console</h2>
      <div className="flex h-[82px] border-t border-l border-[#707070]">
        <pre className={`flex-1 pl-[3px] pt-1 text-[12px] leading-[15px] ${MONO}`}>{log}</pre>
        <div className="w-[15px] mr-0.5 flex flex-col items-center bg-[#f0f0f0]">
          <div className="mt-[46px] w-full h-[18px] bg-[#cdcdcd]" />
          <span className="mt-1 h-3 grid place-items-center"><Chevron dir="down" /></span>
        </div>
      </div>
      <div className="flex h-[17px] items-center border-l border-b border-[#707070]">
        <span className="w-[17px] h-4 grid place-items-center bg-[#f0f0f0]"><Chevron dir="left" /></span>
        <div className="flex-1 flex h-4 bg-[#f0f0f0]">
          <div className="w-[70%] grid place-items-center bg-[#cdcdcd]"><span className="w-2.5 h-[9px] bg-[#f0f0f0]" /></div>
        </div>
        <span className="w-[15px] h-4 grid place-items-center bg-[#f0f0f0]"><Chevron dir="right" /></span>
        <label className="relative ml-[2px] mr-1 grid place-items-center">
          <input type="checkbox" defaultChecked aria-label="Console log" className="appearance-none w-[13px] h-[13px] border border-[#333] bg-white" />
          <svg viewBox="0 0 9 9" className="absolute w-[9px] h-[9px]" fill="none" stroke="#222"><path d="M1 4.500l2.500 3L8 1.500" /></svg>
        </label>
      </div>
      <div className="absolute right-0 top-[10px] w-5 h-[50px] overflow-hidden">
        <div className="w-[50px] h-[50px] rounded-full border-2 border-[#c4c4c4] bg-white p-px">
          <div className="w-full h-full flex items-center rounded-full border border-[#14804f] bg-linear-to-b from-[#8fe08f] via-[#45b854] to-[#4ccc62] font-['Open_Sans',sans-serif] text-[11px] font-bold text-white">
            <span className="pl-px">78</span>
          </div>
        </div>
      </div>
    </section>
  );
}

/* ---------- desktop task bar ---------- */

function TaskButton({ label, className = '', children }: { label: string; className?: string; children: ReactNode }) {
  return (
    <button aria-label={label} className={`w-12 h-full grid place-items-center border-b-2 ${className || 'border-transparent'}`}>
      {children}
    </button>
  );
}

function TrayIcon({ label, children }: { label: string; children: ReactNode }) {
  return <button aria-label={label} className="w-6 h-full grid place-items-center">{children}</button>;
}

function TaskBar() {
  return (
    <footer className="h-[41px] shrink-0 flex pt-px bg-linear-to-r from-[#0a0a0a] from-60% via-[#182407] via-85% to-[#0e1408] text-white">
      <div className="flex">
        <TaskButton label="Start">
          <svg viewBox="0 0 16 16" className="w-4 h-4" fill="#fff"><path d="M0 2.300L6.500 1.400v6.100H0zM7.500 1.200L16 0v7.500H7.500zM0 8.500h6.500v6.100L0 13.700zM7.500 8.500H16V16l-8.500-1.200z" /></svg>
        </TaskButton>
        <TaskButton label="Cortana">
          <svg viewBox="0 0 16 16" className="w-4 h-4" fill="none" stroke="#fff" strokeWidth="2"><circle cx="8" cy="8" r="6.500" /></svg>
        </TaskButton>
        <TaskButton label="Task view">
          <svg viewBox="0 0 16 16" className="w-4 h-4" fill="none" stroke="#fff"><path d="M.5 0v2.500h10V0M.5 5.500h10v5H.5zM.5 16v-2.500h10V16M14.500 0v16M13 5h3v3h-3z" /></svg>
        </TaskButton>
      </div>
      <div className="flex ml-[3px]">
        <TaskButton label="Fan">
          <svg viewBox="0 0 22 22" className="w-[22px] h-[22px]" fill="#e8e8e8" stroke="#111" strokeWidth=".7">
            <path d="M11 11C5 13 .5 10 .5 6S4 0 7.500 1 12 6 11 11z" />
            <path d="M11 11C9 5 12 .5 16 .5S22 4 21 7.500 16 12 11 11z" />
            <path d="M11 11c6-2 10.500 1 10.500 5S18 22 14.500 21 10 16 11 11z" />
            <path d="M11 11c2 6-1 10.500-5 10.500S0 18 1 14.500 6 10 11 11z" />
          </svg>
        </TaskButton>
      </div>
      <div className="flex ml-[6px] gap-px">
        <TaskButton label="Edge">
          <svg viewBox="0 0 22 22" className="w-[22px] h-[22px]">
            <path d="M1 10C2 3 7 1 11 1c6 0 10 4 10 9v3H8c0 3 3 4.500 6 4.500 2 0 4-.5 6-1.500v4c-2 1-4.500 1.500-7 1.500-6 0-9-4-9-8 0-3 2-5.500 5-6.500-1 1-1.500 2-1.500 3h8c0-2-1.500-4-4.500-4-4 0-7 1.500-9 4z" fill="#0f7ddb" />
          </svg>
        </TaskButton>
        <TaskButton label="Store">
          <svg viewBox="0 0 24 24" className="w-6 h-6">
            <path d="M8 7V4c0-4 8-4 8 0v3" fill="none" stroke="#fff" strokeWidth="1.300" />
            <path d="M1 7h22v16H1z" fill="#fff" />
            <path d="M7 9.500h4.500V14H7z" fill="#f25022" /><path d="M12.500 9.500H17V14h-4.500z" fill="#7fba00" />
            <path d="M7 15h4.500v4.500H7z" fill="#00a4ef" /><path d="M12.500 15H17v4.500h-4.500z" fill="#ffb900" />
          </svg>
        </TaskButton>
        <TaskButton label="Files">
          <svg viewBox="0 0 22 20" className="w-[22px] h-5">
            <path d="M0 1h9l2 2h11v16H0z" fill="#e9b93f" /><path d="M0 4h22v15H0z" fill="#fde08a" />
            <path d="M4 19v-9h14v9h-4v-4H8v4z" fill="#38a9e8" />
          </svg>
        </TaskButton>
        <TaskButton label="Chrome" className="border-[#76a9ea]">
          <svg viewBox="0 0 22 22" className="w-[22px] h-[22px]">
            <circle cx="11" cy="11" r="11" fill="#fbc116" />
            <path d="M11 11L1.500 5.500A11 11 0 0 1 20.500 5.500H11z" fill="#dc4437" />
            <path d="M11 11l4.500 3L11 22A11 11 0 0 1 1.500 5.500l5 8z" fill="#1a9c55" />
            <circle cx="11" cy="11" r="5" fill="#fff" /><circle cx="11" cy="11" r="4" fill="#4285f4" />
          </svg>
        </TaskButton>
        <TaskButton label="Star">
          <svg viewBox="0 0 20 23" className="w-5 h-[23px]">
            <path d="M3 0h14a3 3 0 0 1 3 3v13a3 3 0 0 1-3 3h-2v4l-5-4H3a3 3 0 0 1-3-3V3a3 3 0 0 1 3-3z" fill="#0a84f5" />
            <path d="M10 3v6.500M3.800 7.500l6.200 2M16.200 7.500l-6.200 2M6.200 15L10 9.500l3.800 5.500" stroke="#fff" strokeWidth="2.600" fill="none" />
          </svg>
        </TaskButton>
        <TaskButton label="Youdao">
          <span className="w-6 h-6 grid place-items-center rounded bg-[#e0181e] font-['Noto_Sans_CJK_SC',sans-serif] text-[10px] leading-none font-black">有道</span>
        </TaskButton>
        <TaskButton label="WeChat">
          <svg viewBox="0 0 24 20" className="w-6 h-5">
            <path d="M8.500 1C4 1 0 4 0 7.700c0 2 1 3.800 3 5L2.500 15l2.700-1.500c1 .3 2.200.5 3.300.5C13 14 17 11.300 17 7.700S13 1 8.500 1z" fill="#7bc83c" />
            <path d="M17 8c-4 0-7 2.500-7 5.500s3 5.500 7 5.500c1 0 1.800-.2 2.600-.4L22 20l-.6-2.200c1.600-1 2.600-2.500 2.600-4.300C24 10.500 21 8 17 8z" fill="#f2f2f2" />
            <circle cx="6" cy="5.500" r="1.200" fill="#25551b" /><circle cx="11" cy="5.500" r="1.200" fill="#25551b" />
            <circle cx="15" cy="12" r="1" fill="#666" /><circle cx="19.500" cy="12" r="1" fill="#666" />
          </svg>
        </TaskButton>
        <TaskButton label="Fluent" className="bg-[#3d3d3d] border-[#76a9ea]"><FluentIcon className="w-[22px] h-5" /></TaskButton>
        <TaskButton label="CAE" className="bg-[#9d5620] border-[#f47a10]">
          <span className="w-6 h-6 grid place-items-center rounded-full bg-white font-['Liberation_Sans',sans-serif] text-[11px] leading-none font-bold text-[#3a9fc4]">
            <span>C<span className="text-[#6b74c8]">A</span><span className="text-[#3dbb7a]">E</span></span>
          </span>
        </TaskButton>
      </div>
      <div className="ml-auto flex items-center">
        <div className="flex items-center mr-1">
          <TrayIcon label="Show hidden icons"><svg viewBox="0 0 12 8" className="w-3 h-2" fill="none" stroke="#fff" strokeWidth="1.300"><path d="M1 7l5-5 5 5" /></svg></TrayIcon>
          <TrayIcon label="Guard">
            <svg viewBox="0 0 16 16" className="w-4 h-4"><circle cx="8" cy="8" r="8" fill="#f5cf1d" /><path d="M0 8a8 8 0 0 1 13-6L3 14a8 8 0 0 1-3-6z" fill="#9fd62e" /><path d="M8 4v8M4 8h8" stroke="#0f5a1a" strokeWidth="2.500" /></svg>
          </TrayIcon>
          <TrayIcon label="Battery">
            <svg viewBox="0 0 16 12" className="w-4 h-3" fill="none" stroke="#fff"><path d="M5.500 3.500h9v7h-9zM15.500 5.500v3M1 1v3h3V1M2.500 4v4.500H5M1.500 0v1M3.500 0v1" /><path d="M7 5h6v4H7z" fill="#fff" stroke="none" /></svg>
          </TrayIcon>
          <TrayIcon label="Messages">
            <svg viewBox="0 0 16 16" className="w-4 h-4"><rect width="13" height="13" rx="2" fill="#1f9cf5" /><path d="M6.500 2v8M3 4l7 4M10 4L3 8" stroke="#fff" strokeWidth="1.500" /><path d="M7 8h9v6h-5l-2 2v-2H7z" fill="#f5c21d" /><path d="M9 11h5" stroke="#333" strokeDasharray="1 1" /></svg>
          </TrayIcon>
          <TrayIcon label="Wi-Fi">
            <svg viewBox="0 0 14 14" className="w-3.5 h-3.5" fill="none" stroke="#ddd"><path d="M1 13C1 6 6 1 13 1M4 13c0-5 4-9 9-9M7 13c0-3 3-6 6-6M10 13c0-2 1-3 3-3" /><circle cx="12.500" cy="12.500" r="1" fill="#fff" /></svg>
          </TrayIcon>
          <TrayIcon label="Volume">
            <svg viewBox="0 0 16 14" className="w-4 h-3.5" fill="none" stroke="#fff"><path d="M.5 4.500h3l4-3.500v12l-4-3.500h-3zM9.500 5c1 1.500 1 2.500 0 4" /><path d="M11.500 3c2 2.500 2 5.500 0 8M13.500 1.500c3 3.500 3 7.500 0 11" stroke="#888" /></svg>
          </TrayIcon>
          <button className="w-6 font-['Noto_Sans_CJK_SC',sans-serif] text-[13px]">中</button>
        </div>
        <button aria-label="Input method" className="w-7 grid place-items-center">
          <svg viewBox="0 0 16 16" className="w-4 h-4"><path d="M1 3l13-2 1 12-12 2z" fill="#f04a1a" stroke="#f04a1a" strokeWidth="1.500" strokeLinejoin="round" /><path d="M12 4.500C8 3 4.500 4 5 6s6 1 6.500 3.500-4 3-7.500 1.500" fill="none" stroke="#fff" strokeWidth="2" /></svg>
        </button>
        <div className={`w-[76px] text-center text-[12px] leading-[19px] ${SANS}`}>
          <div>8:43</div>
          <div>2019/3/8</div>
        </div>
        <button aria-label="Notifications" className="w-9 grid place-items-center">
          <svg viewBox="0 0 16 16" className="w-4 h-4" fill="none" stroke="#fff"><path d="M.5 1.500h15v11H11L8 15l-3-2.500H.5z" /></svg>
        </button>
        <span className="ml-3 mr-1 h-full border-l border-[#666]" />
      </div>
    </footer>
  );
}

export default function App() {
  return (
    <div className={`h-screen flex flex-col overflow-hidden bg-[#f0f0f0] text-black text-[10px] leading-4 ${MONO}`}>
      <TitleBar />
      <TabBar />
      <Ribbon />
      <main className="flex flex-1 min-h-0 pt-[5px]">
        <TreePanel />
        <TaskPage />
        <div className="flex-1 min-w-0 flex flex-col">
          <div className="flex flex-1 min-h-0 pl-[5px]">
            <Toolbar />
            <Viewport />
          </div>
          <Console />
        </div>
      </main>
      <TaskBar />
    </div>
  );
}
